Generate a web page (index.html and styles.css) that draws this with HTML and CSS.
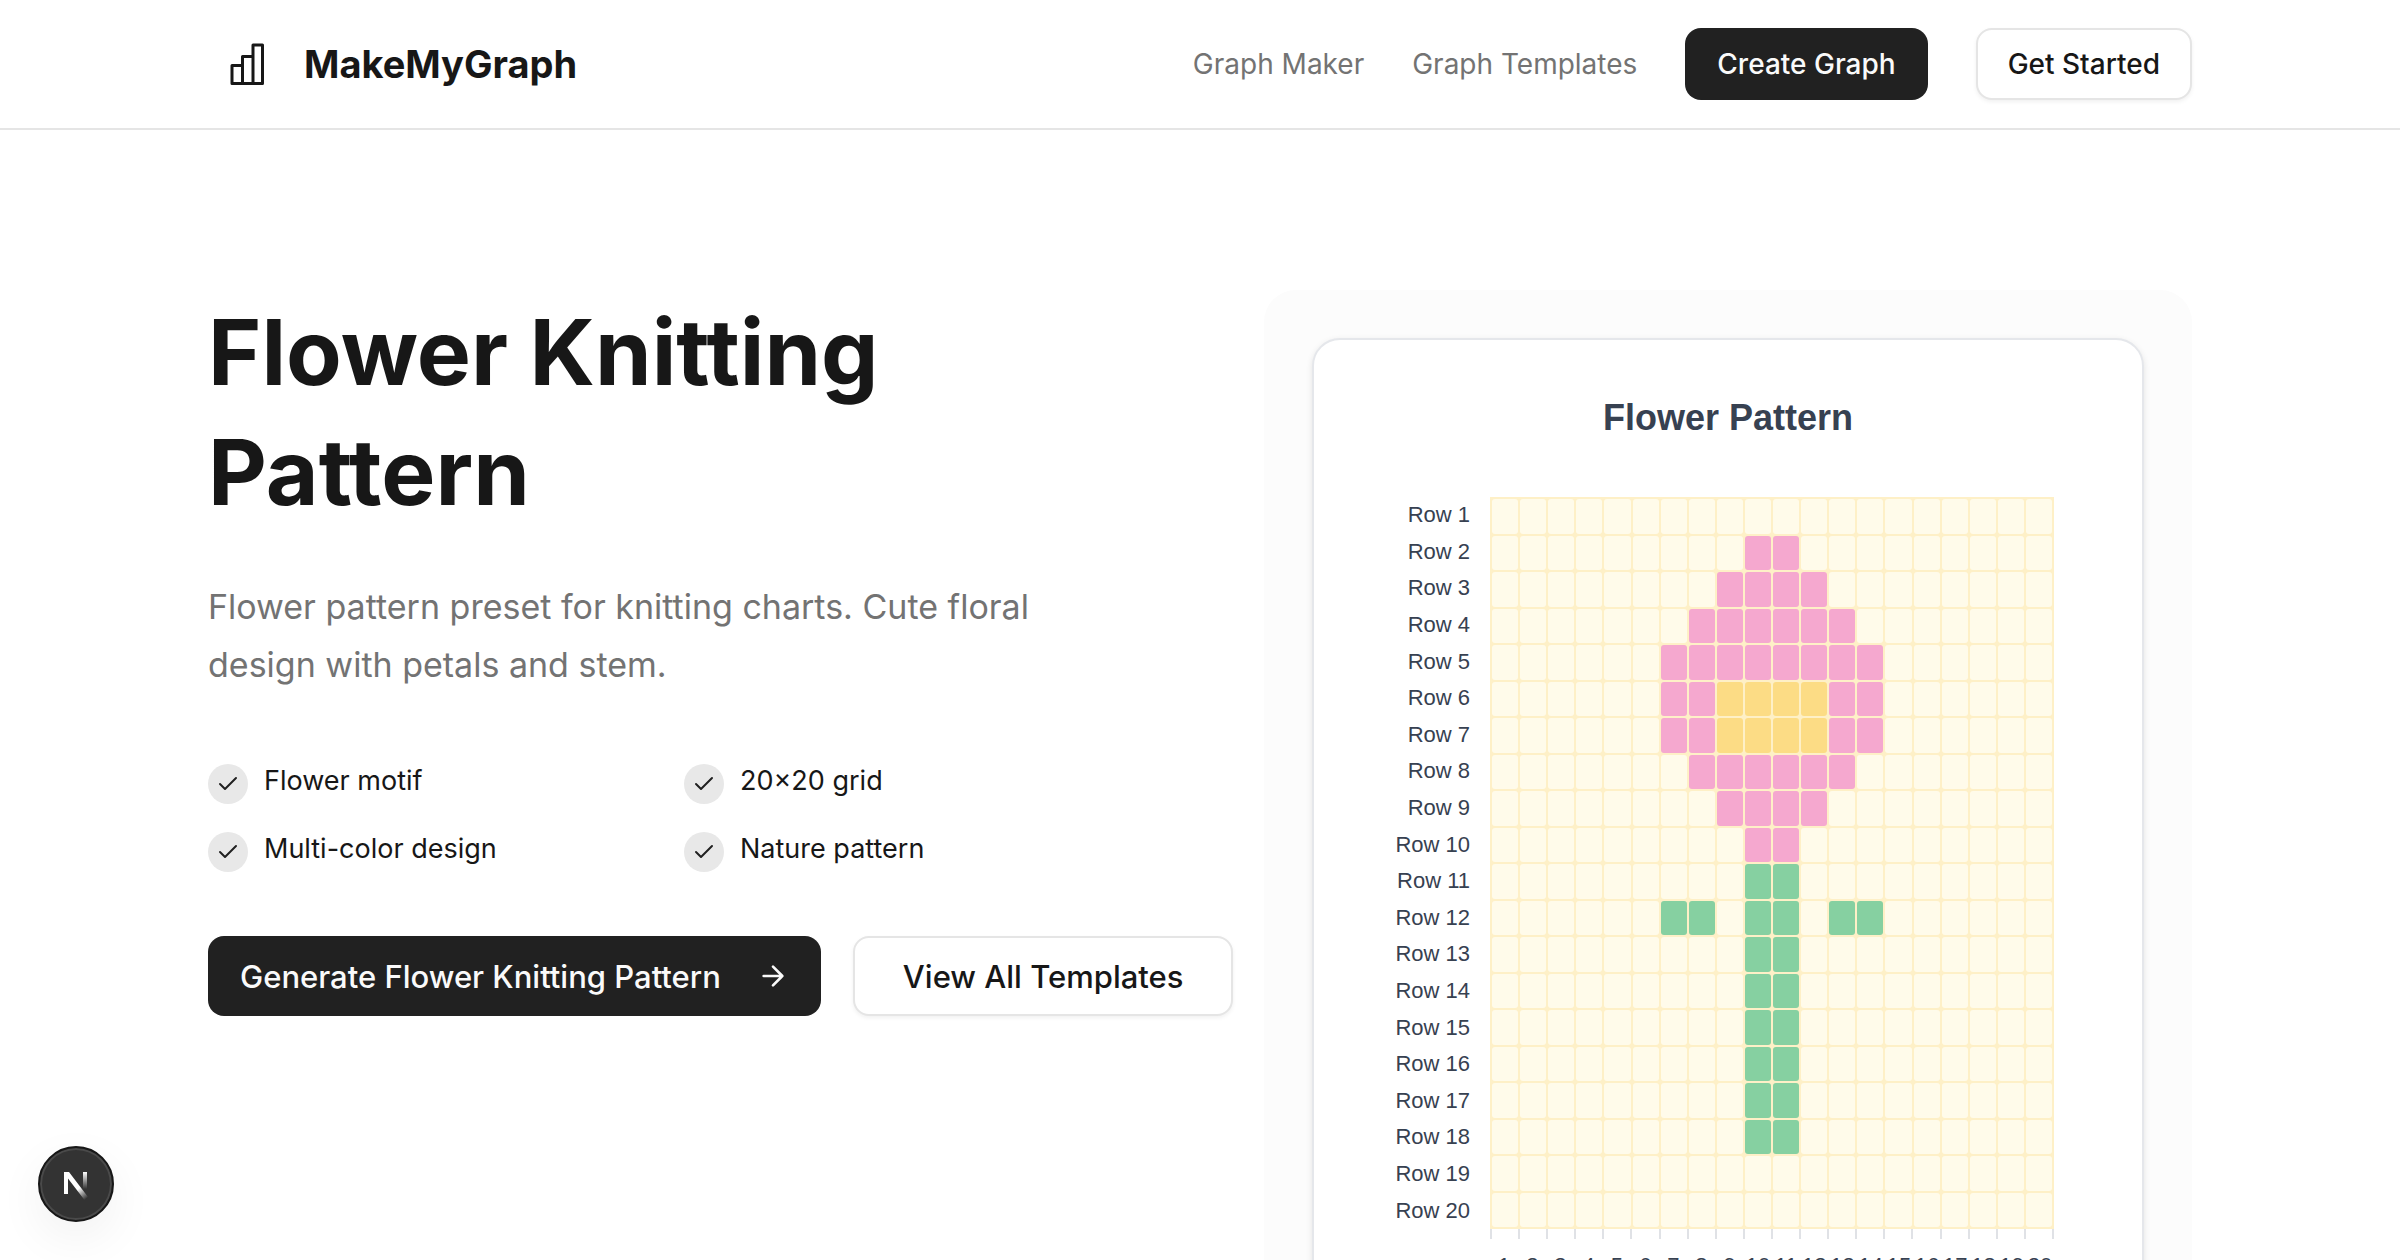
FILE: index.html
```html
<!DOCTYPE html>
<html lang="en">
<head>
<meta charset="UTF-8">
<meta name="viewport" content="width=device-width, initial-scale=1.0">
<title>Flower Knitting Pattern | MakeMyGraph</title>
<link rel="stylesheet" href="styles.css">
</head>

<body>

<header class="header">
<div class="container header-inner">

<a href="#" class="brand">
<svg class="brand-icon" viewBox="0 0 34 42" fill="none" stroke="currentColor" stroke-width="3" stroke-linejoin="round">
<path d="M2 22.5h10.5v18H2zM12.5 13.5H23v27H12.5zM23 2h9.500v38.500H23z"/>
</svg>
<span>MakeMyGraph</span>
</a>

<nav class="nav">
<a href="#">Graph Maker</a>
<a href="#">Graph Templates</a>
<button class="btn btn-dark">Create Graph</button>
<button class="btn btn-light">Get Started</button>
</nav>

</div>
</header>


<main class="container hero">

<section class="intro">

<h1>Flower Knitting Pattern</h1>

<p class="lead">Flower pattern preset for knitting charts. Cute floral design with petals and stem.</p>

<ul class="features">
<li><span class="check"><svg viewBox="0 0 24 24"><path d="M20 6 9 17l-5-5"/></svg></span>Flower motif</li>
<li><span class="check"><svg viewBox="0 0 24 24"><path d="M20 6 9 17l-5-5"/></svg></span>20×20 grid</li>
<li><span class="check"><svg viewBox="0 0 24 24"><path d="M20 6 9 17l-5-5"/></svg></span>Multi-color design</li>
<li><span class="check"><svg viewBox="0 0 24 24"><path d="M20 6 9 17l-5-5"/></svg></span>Nature pattern</li>
</ul>

<div class="actions">
<button class="btn btn-lg btn-dark">
Generate Flower Knitting Pattern
<svg class="arrow" viewBox="0 0 24 24"><path d="M5 12h14M12 5l7 7-7 7"/></svg>
</button>
<button class="btn btn-lg btn-light btn-wide">View All Templates</button>
</div>

</section>


<section class="preview">
<div class="card">

<h2>Flower Pattern</h2>

<div class="chart">
<div class="row-labels" id="rowLabels"></div>
<div class="plot">
<div class="cells" id="cells"></div>
<div class="ticks" id="ticks"></div>
<div class="col-labels" id="colLabels"></div>
</div>
</div>

</div>
</section>

</main>


<button class="dev-badge" aria-label="Open Next.js Dev Tools">
<svg viewBox="0 -6 24 36">
<defs>
<linearGradient id="fadeDiagonal" x1="14" y1="17" x2="22" y2="27" gradientUnits="userSpaceOnUse">
<stop stop-color="#fff"/>
<stop offset="1" stop-color="#fff" stop-opacity="0"/>
</linearGradient>
<linearGradient id="fadeStem" x1="21" y1="0" x2="21" y2="17" gradientUnits="userSpaceOnUse">
<stop stop-color="#fff"/>
<stop offset="1" stop-color="#fff" stop-opacity="0"/>
</linearGradient>
</defs>
<path d="M0 22V0h5l19 25-3.500 3L4 6.500V22z" fill="url(#fadeDiagonal)"/>
<path d="M19 0h4v17h-4z" fill="url(#fadeStem)"/>
</svg>
</button>


<script>

// . background, P petal, Y center, G stem
const pattern=[
"....................",
".........PP.........",
"........PPPP........",
".......PPPPPP.......",
"......PPPPPPPP......",
"......PPYYYYPP......",
"......PPYYYYPP......",
".......PPPPPP.......",
"........PPPP........",
".........PP.........",
".........GG.........",
"......GG.GG.GG......",
".........GG.........",
".........GG.........",
".........GG.........",
".........GG.........",
".........GG.........",
".........GG.........",
"....................",
"...................."
]

const names={".":"",P:"petal",Y:"center",G:"stem"}

document.getElementById("rowLabels").innerHTML=pattern.map((r,i)=>`<span>Row ${i+1}</span>`).join("")

document.getElementById("cells").innerHTML=pattern.map(r=>
[...r].map(c=>`<i class="${names[c]}"></i>`).join("")
).join("")

document.getElementById("ticks").innerHTML="<i></i>".repeat(21)

document.getElementById("colLabels").innerHTML=[...pattern[0]].map((c,i)=>`<span>${i+1}</span>`).join("")

</script>

</body>
</html>
```
FILE: styles.css
```css
*{
box-sizing:border-box;
}

body{
margin:0;
height:100vh;
overflow:hidden;
background:#fff;
color:#171717;
font-family:Inter, "Liberation Sans", sans-serif;
font-size:28px;
}

a{
color:inherit;
text-decoration:none;
}

.container{
max-width:2048px;
margin:0 auto;
padding:0 32px;
}

.header{
border-bottom:2px solid #e5e5e5;
}

.header-inner{
display:flex;
align-items:center;
justify-content:space-between;
height:128px;
}

.brand{
display:flex;
align-items:center;
gap:40px;
padding-left:22px;
font-size:38px;
font-weight:700;
}

.brand-icon{
width:34px;
height:42px;
}

.nav{
display:flex;
align-items:center;
gap:48px;
color:#737373;
}

.btn{
display:inline-flex;
align-items:center;
justify-content:center;
height:72px;
padding:0 30px;
border:2px solid transparent;
border-radius:16px;
font:inherit;
font-weight:500;
white-space:nowrap;
cursor:pointer;
}

.btn-dark{
background:#212121;
color:#fafafa;
}

.btn-light{
background:#fff;
border-color:#e5e5e5;
color:#171717;
box-shadow:0 2px 4px rgba(0,0,0,.06);
}

.btn-lg{
height:80px;
font-size:31px;
}

.btn-wide{
padding:0 48px;
}

.hero{
display:grid;
grid-template-columns:1fr 1fr;
gap:128px;
padding-top:160px;
}

.intro{
min-width:0;
}

h1{
margin:2px 0 46px;
font-size:91px;
font-weight:700;
line-height:120px;
}

.lead{
margin:0 0 66px;
max-width:860px;
color:#737373;
font-size:34px;
line-height:58px;
}

.features{
display:grid;
grid-template-columns:1fr 1fr;
gap:24px;
margin:0 0 64px;
padding:0;
font-size:27px;
list-style:none;
}

.features li{
display:flex;
gap:16px;
line-height:42px;
}

.check{
display:flex;
align-items:center;
justify-content:center;
width:40px;
height:40px;
margin-top:4px;
border-radius:50%;
background:#e8e8e8;
}

.check svg{
width:24px;
height:24px;
fill:none;
stroke:#212121;
stroke-width:2;
stroke-linecap:round;
stroke-linejoin:round;
}

.actions{
display:flex;
gap:32px;
}

.arrow{
width:32px;
height:32px;
margin-left:36px;
fill:none;
stroke:currentColor;
stroke-width:2;
stroke-linecap:round;
stroke-linejoin:round;
}

.preview{
padding:48px;
border-radius:32px;
background:#fcfcfc;
}

.card{
padding:54px 0 80px;
border:2px solid #e5e7eb;
border-radius:28px;
background:#fff;
box-shadow:0 2px 6px rgba(0,0,0,.1);
}

.card h2{
margin:0 0 55px;
color:#374151;
font-family:"Liberation Sans", Arial, sans-serif;
font-size:36px;
line-height:48px;
text-align:center;
}

.chart{
display:flex;
gap:20px;
padding:0 88px 0 80px;
color:#374151;
font-family:"Liberation Sans", Arial, sans-serif;
font-size:22px;
}

.row-labels{
display:grid;
grid-template-rows:repeat(20,1fr);
align-items:center;
width:76px;
height:732px;
text-align:right;
white-space:nowrap;
}

.plot{
flex:1;
}

.cells{
display:grid;
grid-template-columns:repeat(20,1fr);
grid-template-rows:repeat(20,1fr);
gap:2px;
height:732px;
padding:2px;
background:#fef0c7;
}

.cells i{
border-radius:3px;
background:#fffbea;
}

.cells .petal{
background:#f5a8cf;
}

.cells .center{
background:#fcdc85;
}

.cells .stem{
background:#86d0a1;
}

.ticks{
display:flex;
justify-content:space-between;
height:10px;
}

.ticks i{
width:2px;
background:#e0e2e6;
}

.col-labels{
display:grid;
grid-template-columns:repeat(20,1fr);
margin-top:14px;
text-align:center;
}

.dev-badge{
position:fixed;
left:38px;
bottom:38px;
display:flex;
align-items:center;
justify-content:center;
width:76px;
height:76px;
padding:0;
border:2px solid #171717;
border-radius:50%;
background:#333;
box-shadow:inset 0 0 0 2px #4a4a4a, 0 16px 48px rgba(0,0,0,.06);
cursor:pointer;
}

.dev-badge svg{
width:24px;
height:36px;
}
```
